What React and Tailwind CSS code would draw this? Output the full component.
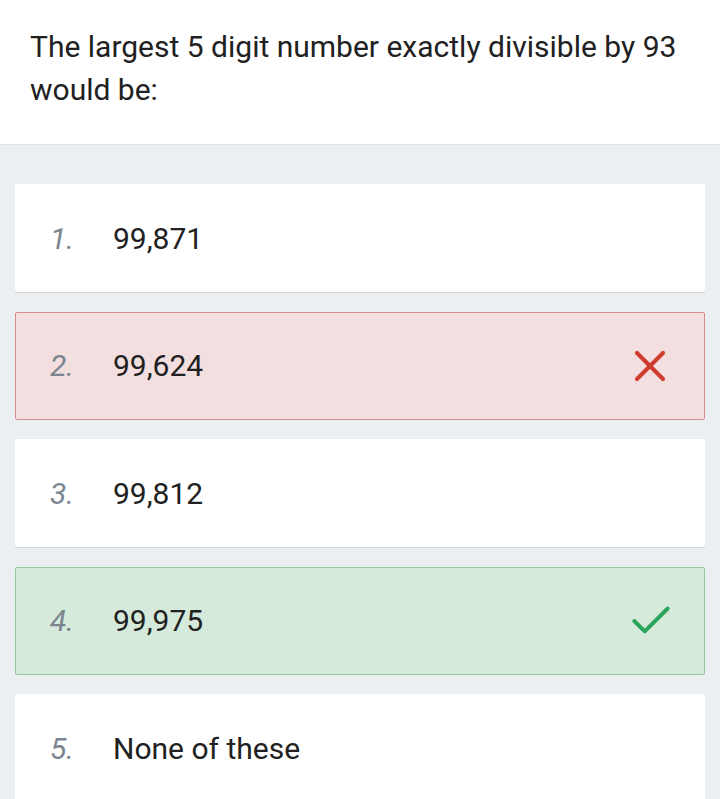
import { X, Check } from "lucide-react";

const options = [
  { n: 1, text: "99,871", state: null },
  { n: 2, text: "99,624", state: "wrong" },
  { n: 3, text: "99,812", state: null },
  { n: 4, text: "99,975", state: "right" },
  { n: 5, text: "None of these", state: null },
];

function Option({ n, text, state }) {
  const tone =
    state === "wrong"
      ? "bg-[#f3dfe0] border border-[#d88a90]"
      : state === "right"
      ? "bg-[#d5eadb] border border-[#95c9a2]"
      : "bg-white border border-transparent shadow-[0_1px_1px_rgba(0,0,0,0.12)]";

  return (
    <div className={`h-[108px] rounded-[2px] flex items-center pl-[34px] pr-[28px] ${tone}`}>
      <span className="w-[63px] italic text-[30px] text-[#7b858f]">{n}.</span>
      <span className="flex-1 text-[30px] text-[#212121]">{text}</span>
      {state === "wrong" && <X size={52} strokeWidth={1.9} className="text-[#cf3b2e]" />}
      {state === "right" && <Check size={50} strokeWidth={1.9} className="text-[#2ba55a]" />}
    </div>
  );
}

export default function App() {
  return (
    <div className="min-h-[799px] bg-[#eceff1] font-['Roboto',sans-serif]">
      <div className="bg-white border-b border-[#dde1e4] pt-[25px] pb-[33px] px-[30px]">
        <p className="text-[30px] leading-[43px] text-[#212121]">
          The largest 5 digit number exactly divisible by 93 would be:
        </p>
      </div>
      <div className="px-[15px] pt-[39px] flex flex-col gap-[19.5px]">
        {options.map((o) => (
          <Option key={o.n} {...o} />
        ))}
      </div>
    </div>
  );
}
